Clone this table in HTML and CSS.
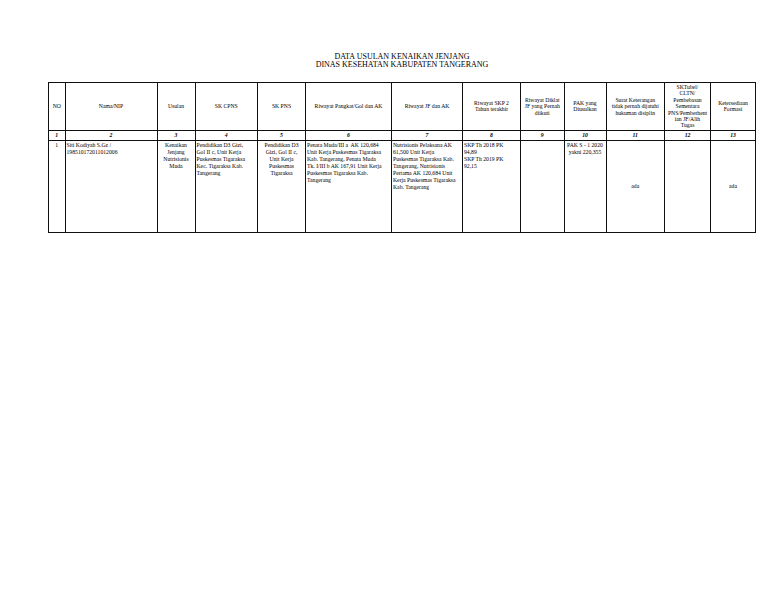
FILE: index.html
```html
<!DOCTYPE html>
<html>
<head>
<meta charset="utf-8">
<link rel="stylesheet" href="styles.css">
</head>
<body>
<div class="page">
  <div class="title">
    <div>DATA USULAN KENAIKAN JENJANG</div>
    <div>DINAS KESEHATAN KABUPATEN TANGERANG</div>
  </div>
  <table class="grid">
    <colgroup>
      <col class="c1"><col class="c2"><col class="c3"><col class="c4"><col class="c5"><col class="c6"><col class="c7"><col class="c8"><col class="c9"><col class="c10"><col class="c11"><col class="c12"><col class="c13">
    </colgroup>
    <tr class="head">
      <td>NO</td>
      <td>Nama/NIP</td>
      <td>Usulan</td>
      <td>SK CPNS</td>
      <td>SK PNS</td>
      <td>Riwayat Pangkat/Gol dan AK</td>
      <td>Riwayat JF dan AK</td>
      <td>Riwayat SKP 2<br>Tahun terakhir</td>
      <td>Riwayat Diklat<br>JF yang Pernah<br>diikuti</td>
      <td>PAK yang<br>Diusulkan</td>
      <td>Surat Keterangan<br>tidak pernah dijatuhi<br>hukuman disiplin</td>
      <td class="tall">SKTubel/<br>CLTN/<br>Pembebasan<br>Sementara<br>PNS/Pemberhent<br>ian JF/Alih<br>Tugas</td>
      <td>Ketersediaan<br>Formasi</td>
    </tr>
    <tr class="nums">
      <td>1</td><td>2</td><td>3</td><td>4</td><td>5</td><td>6</td><td>7</td><td>8</td><td>9</td><td>10</td><td>11</td><td>12</td><td>13</td>
    </tr>
    <tr class="data">
      <td class="ctr">1</td>
      <td>Siti Kodiyah S.Gz /<br>198510172011012006</td>
      <td class="ctr">Kenaikan<br>Jenjang<br>Nutrisionis<br>Muda</td>
      <td>Pendidikan D3 Gizi,<br>Gol II c, Unit Kerja<br>Puskesmas Tigaraksa<br>Kec. Tigaraksa Kab.<br>Tangerang</td>
      <td class="ctr">Pendidikan D3<br>Gizi, Gol II c,<br>Unit Kerja<br>Puskesmas<br>Tigaraksa</td>
      <td>Penata Muda/III a&nbsp; AK 120,684<br>Unit Kerja Puskesmas Tigaraksa<br>Kab. Tangerang, Penata Muda<br>Tk. I/III b AK 167,91 Unit Kerja<br>Puskesmas Tigaraksa Kab.<br>Tangerang</td>
      <td>Nutrisionis Pelaksana AK<br>61,500 Unit Kerja<br>Puskesmas Tigaraksa Kab.<br>Tangerang, Nutrisionis<br>Pertama AK 120,684 Unit<br>Kerja Puskesmas Tigaraksa<br>Kab. Tangerang</td>
      <td>SKP Th 2018 PK<br>94,89<br>SKP Th 2019 PK<br>92,15</td>
      <td></td>
      <td class="ctr">PAK S - 1 2020<br>yakni 220,355</td>
      <td class="mid">ada</td>
      <td></td>
      <td class="mid">ada</td>
    </tr>
  </table>
</div>
</body>
</html>
```
FILE: styles.css
```css
html, body {
  margin: 0;
  padding: 0;
  background: #fff;
}
.page {
  padding: 52.5px 0 0 48px;
  font-family: "Liberation Serif", "Times New Roman", serif;
  color: #000;
}
.title {
  width: 708px;
  text-align: center;
  font-size: 8px;
  line-height: 8.4px;
  margin-bottom: 12.5px;
}
.grid {
  border-collapse: collapse;
  table-layout: fixed;
  width: 708px;
  font-size: 5.7px;
}
.grid td {
  border: 1px solid #111;
  padding: 0 1px;
  white-space: nowrap;
  overflow: visible;
}
.c1 { width: 16.5px; }
.c2 { width: 92px; }
.c3 { width: 38px; }
.c4 { width: 62.5px; }
.c5 { width: 48px; }
.c6 { width: 86px; }
.c7 { width: 71px; }
.c8 { width: 58px; }
.c9 { width: 43.5px; }
.c10 { width: 42px; }
.c11 { width: 58.5px; }
.c12 { width: 46px; }
.c13 { width: 45px; }
.head td {
  height: 47px;
  text-align: center;
  vertical-align: middle;
  line-height: 6.5px;
}
.head td.tall {
  padding: 0;
  line-height: 6.4px;
}
.nums td {
  height: 9px;
  text-align: center;
  vertical-align: middle;
  font-weight: bold;
  font-style: italic;
  line-height: 7px;
}
.data td {
  height: 90px;
  vertical-align: top;
  text-align: left;
  line-height: 7px;
  padding-top: 1.5px;
}
.data td.ctr {
  text-align: center;
}
.data td.mid {
  text-align: center;
  vertical-align: middle;
  padding-top: 0;
}
```
